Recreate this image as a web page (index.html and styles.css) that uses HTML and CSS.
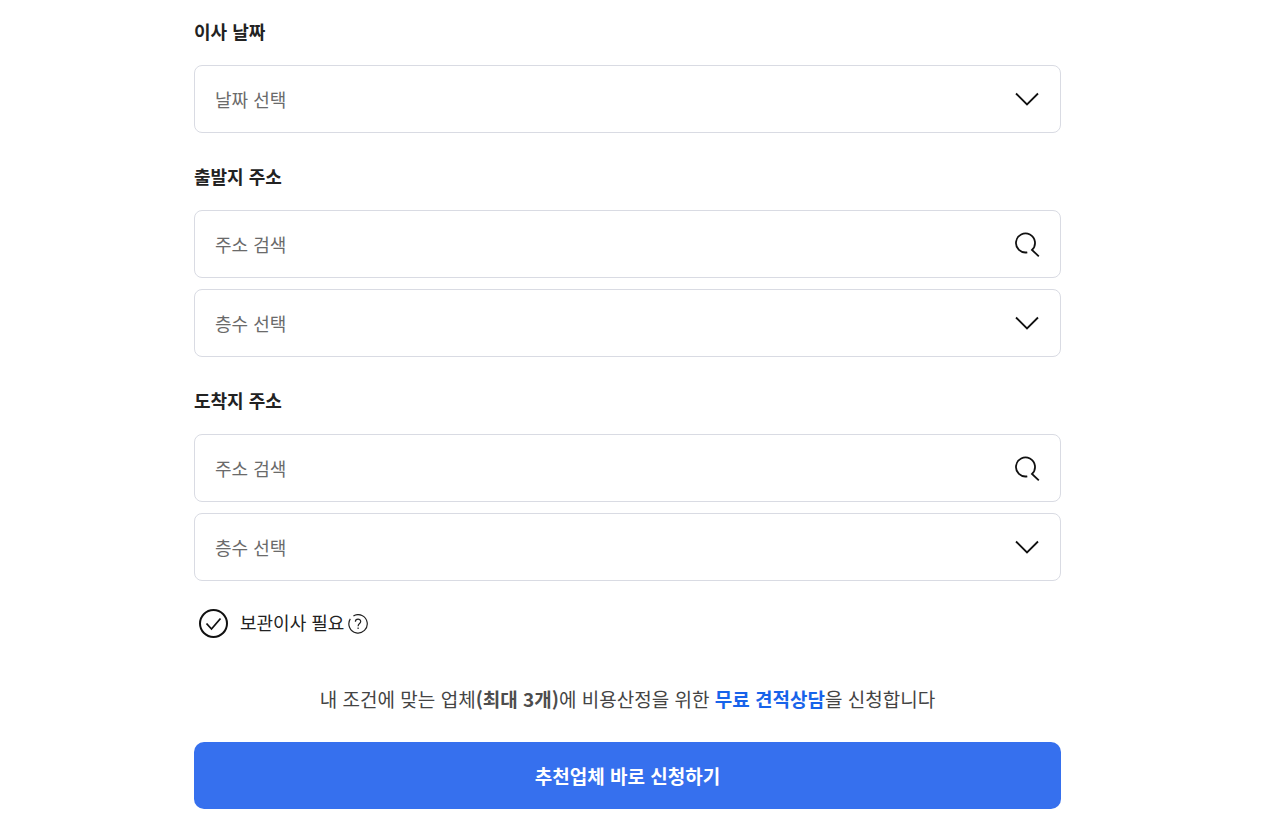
FILE: index.html
```html
<!DOCTYPE html>
<html lang="ko">
<head>
<meta charset="utf-8">
<meta name="viewport" content="width=device-width, initial-scale=1">
<title>이사 견적 신청</title>
<link rel="stylesheet" href="styles.css">
</head>
<body>
<main class="page">
  <form class="form">
    <section class="group">
      <label class="title" for="date">이사 날짜</label>
      <div class="field">
        <select class="control" id="date"><option>날짜 선택</option></select>
        <svg class="icon" viewBox="0 0 26 26" aria-hidden="true"><path d="M2 7.500 13 18.500 24 7.500"/></svg>
      </div>
    </section>

    <section class="group">
      <label class="title" for="from">출발지 주소</label>
      <div class="field">
        <input class="control" id="from" type="text" placeholder="주소 검색">
        <button class="search" type="button" aria-label="출발지 주소 검색"><svg class="icon" viewBox="0 0 26 26" aria-hidden="true"><path d="M13.300 21.300A9.500 9.500 0 1 1 18 18.900L24.800 25.300"/></svg></button>
      </div>
      <div class="field">
        <select class="control" aria-label="출발지 층수"><option>층수 선택</option></select>
        <svg class="icon" viewBox="0 0 26 26" aria-hidden="true"><path d="M2 7.500 13 18.500 24 7.500"/></svg>
      </div>
    </section>

    <section class="group">
      <label class="title" for="to">도착지 주소</label>
      <div class="field">
        <input class="control" id="to" type="text" placeholder="주소 검색">
        <button class="search" type="button" aria-label="도착지 주소 검색"><svg class="icon" viewBox="0 0 26 26" aria-hidden="true"><path d="M13.300 21.300A9.500 9.500 0 1 1 18 18.900L24.800 25.300"/></svg></button>
      </div>
      <div class="field">
        <select class="control" aria-label="도착지 층수"><option>층수 선택</option></select>
        <svg class="icon" viewBox="0 0 26 26" aria-hidden="true"><path d="M2 7.500 13 18.500 24 7.500"/></svg>
      </div>
    </section>

    <div class="storage">
      <span class="check">
        <input class="check-input" type="checkbox" id="storage">
        <svg class="check-mark" viewBox="0 0 29 29" aria-hidden="true"><path d="M7.500 14.500 12.500 20 21.500 9.500"/></svg>
      </span>
      <label class="storage-label" for="storage">보관이사 필요</label>
      <button class="help" type="button" aria-label="보관이사 도움말">
        <svg class="help-icon" viewBox="0 0 20 20" aria-hidden="true"><path d="M5.400 1.900A9.200 9.200 0 1 1 2.300 4.900M7.400 7.800C7.400 4.300 12.700 4.300 12.700 7.600C12.700 9.500 10.100 9.700 10.100 12.200M10.100 13.600V15"/></svg>
      </button>
    </div>

    <p class="notice">내 조건에 맞는 업체<strong>(최대 3개)</strong>에 비용산정을 위한 <strong class="accent">무료 견적상담</strong>을 신청합니다</p>
    <button class="submit" type="submit">추천업체 바로 신청하기</button>
  </form>
</main>
</body>
</html>
```
FILE: styles.css
```css
* {
  box-sizing: border-box;
}

body {
  margin: 0;
  background: #fff;
  color: #222;
  font-family: "Noto Sans CJK KR", "Noto Sans", sans-serif;
  font-size: 18px;
  line-height: 26px;
}

button,
input,
select {
  margin: 0;
  font: inherit;
}

button {
  padding: 0;
  border: 0;
  background: none;
  cursor: pointer;
}

.page {
  padding: 18px 25px 19px 0;
}

.form {
  width: 100%;
  max-width: 867px;
  margin: 0 auto;
}

.group {
  display: flex;
  flex-direction: column;
  gap: 11px;
  margin-bottom: 30px;
}

.title {
  margin-bottom: 10px;
  font-weight: 700;
}

.field {
  display: grid;
  grid-template-columns: 1fr 26px;
  align-items: center;
  height: 68px;
  padding-right: 20px;
  border: 1px solid #d9dbe3;
  border-radius: 8px;
}

.field > * {
  grid-row: 1;
}

.control {
  grid-column: 1 / 3;
  width: 100%;
  height: 66px;
  padding: 0 46px 0 20px;
  border: 0;
  border-radius: 8px;
  outline: 0;
  background: transparent;
  color: #6a6a6a;
  appearance: none;
}

.control::placeholder {
  color: #6a6a6a;
  opacity: 1;
}

.icon {
  display: block;
  grid-column: 2;
  width: 26px;
  height: 26px;
  fill: none;
  stroke: #111;
  stroke-width: 1.800;
  pointer-events: none;
}

.search {
  grid-column: 2;
}

.storage {
  display: flex;
  align-items: center;
  height: 29px;
  margin: -2px 0 48px;
  padding-left: 5px;
}

.storage-label {
  align-self: flex-start;
}

.check {
  display: grid;
  width: 29px;
  height: 29px;
  margin-right: 12px;
}

.check > * {
  grid-area: 1 / 1;
}

.check-input {
  width: 29px;
  height: 29px;
  border: 2px solid #111;
  border-radius: 50%;
  appearance: none;
}

.check-mark {
  width: 29px;
  height: 29px;
  fill: none;
  stroke: #111;
  stroke-width: 1.800;
  pointer-events: none;
}

.help {
  margin-left: 4px;
}

.help-icon {
  display: block;
  width: 20px;
  height: 20px;
  fill: none;
  stroke: #222;
  stroke-width: 1.200;
}

.notice {
  margin: 0 0 30px;
  color: #444;
  font-size: 19px;
  text-align: center;
}

.notice strong {
  color: #4d4d4d;
  font-weight: 700;
}

.notice .accent {
  color: #1763ea;
}

.submit {
  display: block;
  width: 100%;
  height: 67px;
  border-radius: 10px;
  background: #3670ee;
  color: #fff;
  font-size: 19px;
  font-weight: 700;
}
```
